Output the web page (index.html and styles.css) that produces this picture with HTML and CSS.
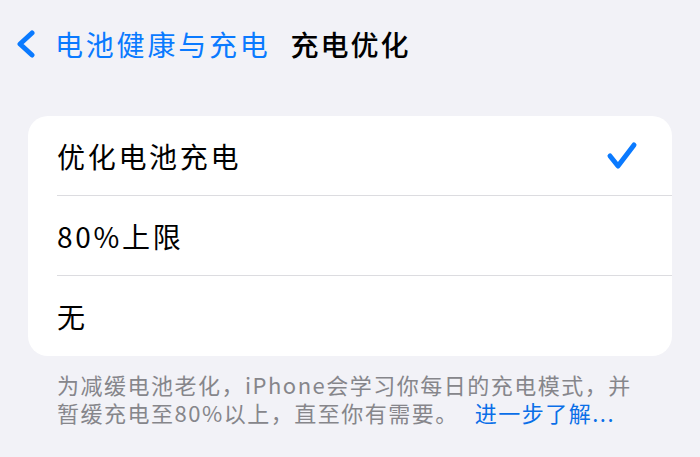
FILE: index.html
```html
<!DOCTYPE html>
<html lang="zh-CN">
<head>
  <meta charset="UTF-8">
  <meta name="viewport" content="width=device-width, initial-scale=1.0">
  <title>充电优化</title>
  <link rel="stylesheet" href="styles.css">
</head>
<body>

  <header class="nav">
    <a class="back" href="#">
      <svg class="chevron" width="22" height="28" viewBox="0 0 22 28">
        <polyline points="17,3 5,14 17,25" fill="none" stroke="#0a7aff" stroke-width="5" stroke-linecap="round" stroke-linejoin="round"/>
      </svg>
      <span>电池健康与充电</span>
    </a>
    <h1>充电优化</h1>
  </header>

  <ul class="options">
    <li class="option">
      <span>优化电池充电</span>
      <svg class="check" width="32" height="30" viewBox="0 0 32 30">
        <polyline points="4,15 12,25 28,4" fill="none" stroke="#0a7aff" stroke-width="5" stroke-linecap="round" stroke-linejoin="round"/>
      </svg>
    </li>
    <li class="option"><span>80%上限</span></li>
    <li class="option"><span>无</span></li>
  </ul>

  <p class="note">
    <span class="line">为减缓电池老化，iPhone会学习你每日的充电模式，并</span>
    <span class="line">暂缓充电至80%以上，直至你有需要。<a href="#">进一步了解...</a></span>
  </p>

</body>
</html>
```

FILE: styles.css
```css
body {
  margin: 0;
  background-color: #f2f2f7;
  font-family: "Noto Sans CJK SC", "Noto Sans", sans-serif;
  color: #000;
}

.nav {
  display: flex;
  align-items: center;
  height: 88px;
  padding-left: 15px;
}

.back {
  display: flex;
  align-items: center;
  gap: 18px;
  color: #0a7aff;
  text-decoration: none;
  font-size: 28px;
  letter-spacing: 2.8px;
}

.nav h1 {
  margin: 0 0 0 20px;
  font-size: 28px;
  font-weight: 500;
  letter-spacing: 2px;
}

.options {
  list-style: none;
  margin: 28px 28px 0 28px;
  padding: 0 0 0 29px;
  background-color: #fff;
  border-radius: 20px;
}

.option {
  display: flex;
  align-items: center;
  justify-content: space-between;
  height: 79px;
  padding-right: 34px;
  border-bottom: 1px solid #dcdce0;
  font-size: 28px;
  letter-spacing: 2.7px;
}

.option:last-child {
  border-bottom: none;
  height: 80px;
}

.note {
  display: flex;
  flex-direction: column;
  margin: 14px 0 0 0;
  padding: 0 57px;
  font-size: 22px;
  line-height: 28px;
  letter-spacing: 1.5px;
  color: #86868b;
}

.line {
  white-space: nowrap;
}

.note a {
  margin-left: 16px;
  color: #0a6fe8;
  text-decoration: none;
}
```
